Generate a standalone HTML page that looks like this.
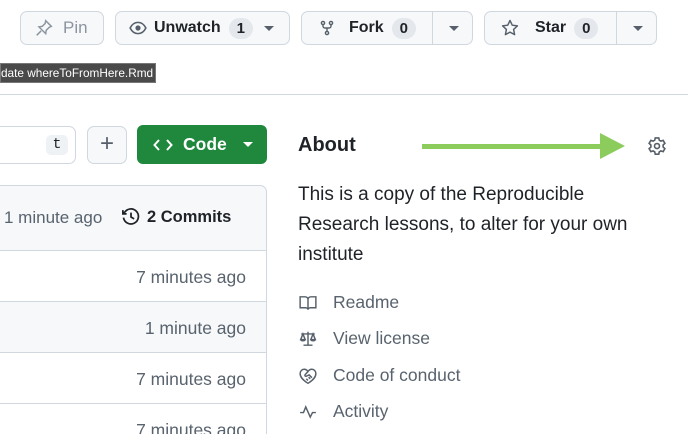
<!DOCTYPE html>
<html><head><style>
*{box-sizing:border-box;margin:0;padding:0}
html,body{width:688px;height:434px;overflow:hidden}
body{background:#fff;font-family:"Liberation Sans",sans-serif;color:#1f2328;position:relative}
.a{position:absolute}
.btn{position:absolute;top:11px;height:34px;border:1px solid #d0d7de;border-radius:7px;background:#f6f8fa;font-size:16px;font-weight:bold;display:flex;align-items:center}
.cnt{background:#e4e7eb;border-radius:12px;padding:2px 8px;font-size:15px;margin-left:8px}
.caret{width:0;height:0;border-left:5px solid transparent;border-right:5px solid transparent;border-top:5px solid #57606a}
.row{position:absolute;left:-2px;width:269px;border-top:1px solid #d0d7de;border-right:1px solid #d0d7de;font-size:17.5px;color:#59636e;text-align:right;padding-right:20px}
.lk{position:absolute;left:298px;font-size:17.5px;color:#59636e;display:flex;align-items:center}
.lk svg{margin-right:15px}
</style></head><body>

<div class="btn" style="left:20px;width:84px;color:#8c959f;font-weight:normal;padding-left:14px;font-size:17px">
<svg width="18" height="18" viewBox="0 0 16 16" fill="none" stroke="#8c959f" stroke-width="1.3"><path d="M9.5 1.5l5 5-2 1-2.5 2.5-.5 3-6-6 3-.5L9 4z M5.5 10.5L1.5 14.5"/></svg>
<span style="margin-left:10px">Pin</span></div>

<div class="btn" style="left:115px;width:175px;padding-left:13px">
<svg width="18" height="18" viewBox="0 0 16 16" fill="none" stroke="#57606a" stroke-width="1.4"><path d="M1 8c1.5-3 4-5 7-5s5.5 2 7 5c-1.5 3-4 5-7 5S2.5 11 1 8z"/><circle cx="8" cy="8" r="1.6" fill="#57606a"/></svg>
<span style="margin-left:7px">Unwatch</span><span class="cnt">1</span><span class="caret" style="margin-left:11px"></span></div>

<div class="btn" style="left:301px;width:172px;padding-left:17px">
<svg width="16" height="18" viewBox="0 0 16 16" fill="none" stroke="#57606a" stroke-width="1.4"><circle cx="4" cy="3" r="1.6"/><circle cx="12" cy="3" r="1.6"/><circle cx="8" cy="13" r="1.6"/><path d="M4 4.6v1.4c0 1 .7 2 2 2h4c1.3 0 2-1 2-2V4.6M8 8v3.4"/></svg>
<span style="margin-left:14px">Fork</span><span class="cnt">0</span>
<span class="a" style="left:130px;top:0;height:32px;border-left:1px solid #d0d7de"></span><span class="caret a" style="left:147px;top:14px"></span></div>

<div class="btn" style="left:484px;width:173px;padding-left:16px">
<svg width="18" height="18" viewBox="0 0 16 16" fill="none" stroke="#57606a" stroke-width="1.3" stroke-linejoin="round"><path d="M8 1.3l2 4.2 4.6.6-3.4 3.2.9 4.6L8 11.7l-4.1 2.2.9-4.6L1.4 6.1 6 5.5z"/></svg>
<span style="margin-left:16px">Star</span><span class="cnt">0</span>
<span class="a" style="left:131px;top:0;height:32px;border-left:1px solid #d0d7de"></span><span class="caret a" style="left:148px;top:14px"></span></div>

<div class="a" style="left:0;top:63px;width:156px;height:20px;background:#4a4a4a;border:1px solid #777;color:#fff;font-size:11.8px;line-height:18px;padding-left:0;white-space:nowrap;overflow:hidden">date whereToFromHere.Rmd</div>

<div class="a" style="left:0;top:94px;width:688px;border-top:1px solid #d0d7de"></div>

<div class="a" style="left:-10px;top:126px;width:86px;height:38px;border:1px solid #d0d7de;border-radius:7px"></div>
<div class="a" style="left:46px;top:135px;width:22px;height:20px;background:#eff2f5;border-radius:5px;font-family:'Liberation Mono',monospace;font-size:15px;text-align:center;line-height:20px">t</div>
<div class="a" style="left:87px;top:126px;width:40px;height:38px;border:1px solid #d0d7de;border-radius:7px;background:#f6f8fa;text-align:center;font-size:24px;line-height:34px;color:#57606a">+</div>
<div class="a" style="left:137px;top:125px;width:130px;height:39px;border-radius:6px;background:#1f883d;color:#fff;font-weight:bold;font-size:17.5px;display:flex;align-items:center;padding-left:16px">
<svg width="20" height="16" viewBox="0 0 20 16" fill="none" stroke="#fff" stroke-width="2"><path d="M6 3L1.5 8 6 13M14 3l4.5 5L14 13"/></svg>
<span style="margin-left:10px">Code</span><span class="caret" style="border-top-color:#fff;margin-left:16px"></span></div>

<div class="a" style="left:-2px;top:185px;width:269px;height:66px;background:#f6f8fa;border:1px solid #d0d7de;border-left:none;border-radius:0 7px 0 0"></div>
<div class="a" style="left:4px;top:208px;font-size:17px;color:#59636e">1 minute ago</div>
<div class="a" style="left:121px;top:207px;display:flex;align-items:center;font-size:16.5px;font-weight:bold">
<svg width="20" height="20" viewBox="0 0 16 16" fill="none" stroke="#1f2328" stroke-width="1.4"><path d="M2.5 5A6 6 0 1 1 2 8.5M1.5 2.5V5.5h3M8 4.5V8l2.5 1.5"/></svg>
<span style="margin-left:6px">2 Commits</span></div>

<div class="row" style="top:250px;height:52px;line-height:52px">7 minutes ago</div>
<div class="row" style="top:301px;height:52px;line-height:52px;background:#f6f8fa">1 minute ago</div>
<div class="row" style="top:352px;height:52px;line-height:52px">7 minutes ago</div>
<div class="row" style="top:403px;height:31px;line-height:52px;overflow:hidden">7 minutes ago</div>

<div class="a" style="left:298px;top:134px;font-size:20px;font-weight:bold">About</div>
<div class="a" style="left:422px;top:144px;width:180px;height:5px;background:#8bcc5c"></div>
<div class="a" style="left:600px;top:133px;width:0;height:0;border-top:13px solid transparent;border-bottom:13px solid transparent;border-left:25px solid #8bcc5c"></div>
<svg class="a" style="left:647px;top:136px" width="20" height="20" viewBox="0 0 16 16" fill="none" stroke="#57606a" stroke-width="1.3"><path d="M6.6 1.5h2.8l.4 1.8 1.3.8 1.8-.6 1.4 2.4-1.4 1.3v1.6l1.4 1.3-1.4 2.4-1.8-.6-1.3.8-.4 1.8H6.6l-.4-1.8-1.3-.8-1.8.6-1.4-2.4 1.4-1.3V7.2L1.7 5.9l1.4-2.4 1.8.6 1.3-.8z"/><circle cx="8" cy="8" r="2"/></svg>

<div class="a" style="left:298px;top:180px;font-size:19px;line-height:30px;width:400px;white-space:nowrap">This is a copy of the Reproducible<br>Research lessons, to alter for your own<br>institute</div>

<div class="lk" style="top:292px"><svg width="20" height="18" viewBox="0 0 16 16" fill="none" stroke="#57606a" stroke-width="1.3"><path d="M1 2.5h4.5c1.3 0 2.5 1 2.5 2.3V14c0-1-1-1.8-2.2-1.8H1zM15 2.5h-4.5C9.2 2.5 8 3.5 8 4.8V14c0-1 1-1.8 2.2-1.8H15z"/></svg>Readme</div>
<div class="lk" style="top:328px"><svg width="20" height="18" viewBox="0 0 16 16" fill="none" stroke="#57606a" stroke-width="1.3"><path d="M8 1.5v12M4 13.5h8M2 3.5h12M3.5 3.5L1.5 8.5h4zM12.5 3.5l-2 5h4zM1.5 8.5c.5 1.5 3.5 1.5 4 0M10.5 8.5c.5 1.5 3.5 1.5 4 0"/></svg>View license</div>
<div class="lk" style="top:365px"><svg width="20" height="18" viewBox="0 0 16 16" fill="none" stroke="#57606a" stroke-width="1.3"><path d="M8 14.5C4 12 1 9.5 1 5.8 1 3.7 2.6 2 4.6 2 6 2 7.2 2.8 8 4c.8-1.2 2-2 3.4-2 2 0 3.6 1.7 3.6 3.8 0 3.7-3 6.2-7 8.7zM8 4L5.5 6.8c-.6.7 0 1.7 1 1.4L9 7l2.5 2.5M6.5 10.5L8 12M8.5 9l1.5 1.5"/></svg>Code of conduct</div>
<div class="lk" style="top:401px"><svg width="20" height="18" viewBox="0 0 16 16" fill="none" stroke="#57606a" stroke-width="1.3"><path d="M1 8.5h3l2-5 4 9 2-4h3"/></svg>Activity</div>
</body></html>
